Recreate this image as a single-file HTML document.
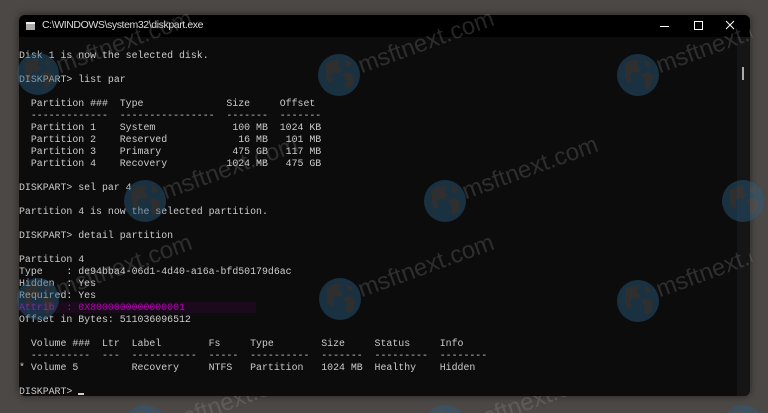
<!DOCTYPE html>
<html><head><meta charset="utf-8"><style>
html,body{margin:0;padding:0;width:768px;height:413px;overflow:hidden;background:#4b4845;}
.clip{position:relative;width:768px;height:413px;overflow:hidden;}
.win{position:absolute;left:19px;top:15px;width:731px;height:381px;background:#0c0c0c;border-radius:6px;overflow:hidden;box-shadow:0 0 8px rgba(0,0,0,.5);}
.title{position:absolute;left:0;top:0;width:100%;height:22px;background:#000;}
.title .t{position:absolute;left:23px;top:4px;font:10.5px "Liberation Sans",sans-serif;color:#ddd;letter-spacing:-0.4px}
.ico{position:absolute;left:7px;top:7px;width:9px;height:6px;background:#aaa;border-top:2px solid #eee}
.sb{position:absolute;right:0;top:22px;width:13px;height:359px;background:#151515}
.sb i{position:absolute;left:5px;top:30px;width:2px;height:13px;background:#aaa}
pre{position:absolute;left:0;top:35px;margin:0;font:9.9px/12px "Liberation Mono",monospace;color:#cccccc;}
.att{color:#b400b4;background:#1b0a1b;}
.cur{display:inline-block;width:6px;height:2px;background:#ccc;vertical-align:-1px}
.g{position:absolute;width:42px;height:42px;opacity:.45}
.w{position:absolute;font:24px "Liberation Sans",sans-serif;color:rgba(170,170,170,.22);transform:rotate(-20deg);transform-origin:left bottom;white-space:nowrap}
</style></head><body><div class="clip">
<svg width="0" height="0" style="position:absolute"><defs><symbol id="gl" viewBox="0 0 42 42"><circle cx="21" cy="21" r="21" fill="#2a5f82"/><path d="M8 10c5-4 10-5 14-3l-2 5 4 3-3 4-5-1-3 4 2 5-4 2-3-6zM24 20l7-2 5 4-1 8-5 6-3-4 1-6zM28 6l6 3-2 4-4-1z" fill="#5a5a5a"/></symbol></defs></svg>
<div class="win">
<div class="title"><div class="ico"></div><div class="t">C:\WINDOWS\system32\diskpart.exe</div>
<svg style="position:absolute;left:0;top:0" width="731" height="22"><g stroke="#fff" stroke-width="1" fill="none"><line x1="641" y1="11.5" x2="650" y2="11.5"/><rect x="675.5" y="6.5" width="8" height="8"/><path d="M707 6l8 8M715 6l-8 8"/></g></svg></div>
<div class="sb"><i></i></div>
<pre>Disk 1 is now the selected disk.

DISKPART&gt; list par

  Partition ###  Type              Size     Offset
  -------------  ----------------  -------  -------
  Partition 1    System             100 MB  1024 KB
  Partition 2    Reserved            16 MB   101 MB
  Partition 3    Primary            475 GB   117 MB
  Partition 4    Recovery          1024 MB   475 GB

DISKPART&gt; sel par 4

Partition 4 is now the selected partition.

DISKPART&gt; detail partition

Partition 4
Type    : de94bba4-06d1-4d40-a16a-bfd50179d6ac
Hidden  : Yes
Required: Yes
<span class="att">Attrib  : 0X8000000000000001            </span>
Offset in Bytes: 511036096512

  Volume ###  Ltr  Label        Fs     Type        Size     Status     Info
  ----------  ---  -----------  -----  ----------  -------  ---------  --------
* Volume 5         Recovery     NTFS   Partition   1024 MB  Healthy    Hidden

DISKPART&gt; <span class="cur"></span></pre>
</div>
<svg class="g" style="left:17px;top:53px"><use href="#gl"/></svg><div class="w" style="left:62px;top:52px">msftnext.com</div>
<svg class="g" style="left:318px;top:54px"><use href="#gl"/></svg><div class="w" style="left:364px;top:52px">msftnext.com</div>
<svg class="g" style="left:617px;top:54px"><use href="#gl"/></svg><div class="w" style="left:662px;top:52px;width:100px;overflow:hidden">msftnext.com</div>
<svg class="g" style="left:124px;top:180px"><use href="#gl"/></svg><div class="w" style="left:168px;top:178px">msftnext.com</div>
<svg class="g" style="left:424px;top:180px"><use href="#gl"/></svg><div class="w" style="left:468px;top:178px">msftnext.com</div>
<svg class="g" style="left:722px;top:180px;width:42px"><use href="#gl"/></svg>
<svg class="g" style="left:17px;top:278px"><use href="#gl"/></svg><div class="w" style="left:62px;top:276px">msftnext.com</div>
<svg class="g" style="left:319px;top:278px"><use href="#gl"/></svg><div class="w" style="left:364px;top:276px">msftnext.com</div>
<svg class="g" style="left:617px;top:280px"><use href="#gl"/></svg><div class="w" style="left:662px;top:276px;width:100px;overflow:hidden">msftnext.com</div>
<svg style="position:absolute;left:0;top:396px" width="768" height="17" viewBox="0 0 768 17">
<g opacity=".45"><use href="#gl" x="124" y="9" width="42" height="42"/><use href="#gl" x="424" y="9" width="42" height="42"/><use href="#gl" x="722" y="9" width="42" height="42"/></g>
<g font-family="Liberation Sans, sans-serif" font-size="24" fill="rgba(170,170,170,.22)"><text transform="translate(168,36) rotate(-20)">msftnext.com</text><text transform="translate(468,36) rotate(-20)">msftnext.com</text></g>
</svg>
</div></body></html>
